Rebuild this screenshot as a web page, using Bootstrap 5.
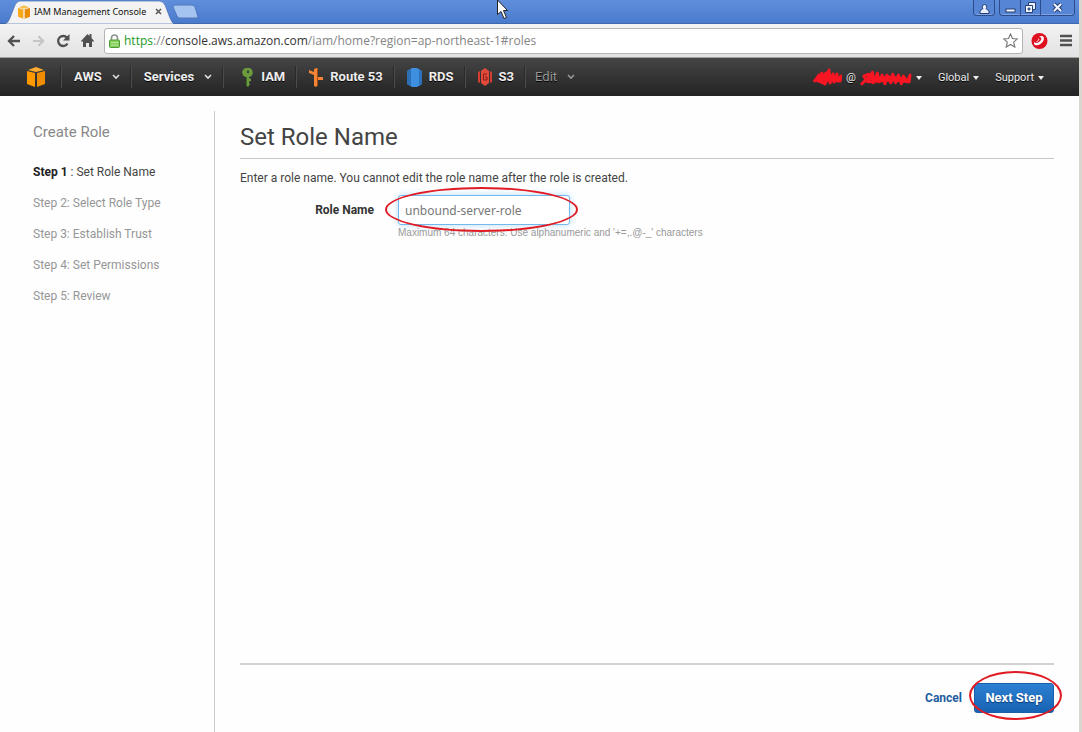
<!DOCTYPE html>
<html lang="en">
<head>
<meta charset="utf-8">
<meta name="viewport" content="width=device-width, initial-scale=1">
<title>IAM Management Console</title>
<link href="https://cdn.jsdelivr.net/npm/bootstrap@5.3.0/dist/css/bootstrap.min.css" rel="stylesheet">
<style>
  body { font-family: Roboto, "Liberation Sans", sans-serif; font-size: 12px; line-height: 16px; color: #444; background: #fefefe; }
  .browser { border-right: 3px solid #d9d5cf; }
  .titlebar { height: 24px; background: linear-gradient(#5f8fdb, #4a7acc); border-bottom: 1px solid #3f68ad; }
  .browser-tab { width: 169px; margin-left: 5px; padding: 0 12px 0 13px; font-family: "Noto Sans", sans-serif; font-size: 9px; color: #111; }
  .tab-shape { top: 0; left: 0; width: 100%; height: 24px; }
  .tab-face { z-index: 1; }
  .bare { border: 0; padding: 0; background: none; line-height: 0; color: inherit; }
  .new-tab { margin: 0 0 1px -2px; }
  .pointer { left: 497px; top: 0; z-index: 5; }
  .win-group { height: 16px; border: 1px solid #2c4c8e; border-top: 0; border-radius: 0 0 4px 4px; background: #5585d4; box-shadow: inset 0 -1px #7fa5e4; }
  .win-btn { width: 20px; height: 15px; }
  .win-btn + .win-btn { border-left: 1px solid #2c4c8e; }
  .win-close { width: 34px; }
  .toolbar { height: 34px; padding: 0 7px; background: linear-gradient(#f3f3f3, #e2e2e3); border-bottom: 1px solid #9da39d; color: #505050; }
  .tools { gap: 11px; }
  .address { height: 26px; margin-left: 10px; margin-right: 8px; padding: 0 4px; background: #fff; border: 1px solid #b4b4b4; border-radius: 3px; font-family: "Open Sans", sans-serif; font-size: 12px; color: #333; }
  .proto { color: #1c9a1c; }
  .dim { color: #858585; }
  .console-nav { height: 38px; background: linear-gradient(#454545, #232323); font-size: 13px; font-weight: 700; }
  .console-nav a { color: #eee; text-decoration: none; text-shadow: 0 1px #000; }
  .console-nav .cell { height: 22px; display: flex; align-items: center; border-left: 1px solid #2a2a2a; box-shadow: inset 1px 0 #4b4b4b; padding: 0 10px 0 13px; gap: 7px; }
  .console-nav .cell.menu { gap: 10px; padding: 0 10px 0 13px; }
  .console-nav .cell.key { padding-left: 19px; gap: 8px; }
  .brand-cell { width: 60px; padding-left: 26px; }
  .console-nav .cell.edit { color: #999; font-weight: 400; padding-left: 10px; }
  .account { font-size: 11px; font-weight: 400; padding: 2px 35px 0 0; gap: 16px; }
  .account a { display: flex; align-items: center; gap: 4px; }
  .sidebar { width: 215px; padding-left: 33px; margin-top: 15px; border-right: 1px solid #c9cbc9; }
  .sidebar h2 { font-size: 15px; line-height: 20px; margin: 11px 0 0; color: #888; font-weight: 400; }
  .steps { margin: 15px 0 0; color: #969696; }
  .steps li { height: 31px; line-height: 31px; }
  .steps .now { color: #444; }
  .steps strong { color: #222; }
  .pane { padding: 25px 25px 19px; }
  .pane h1 { font-size: 24px; line-height: 32px; font-weight: 400; color: #444; margin: 0; padding-bottom: 5px; border-bottom: 1px solid #c3c9c0; }
  .intro { margin: 11px 0 0; }
  .name-row { margin-top: 9px; }
  .name-label { width: 158px; padding-right: 24px; line-height: 30px; font-weight: 700; color: #333; text-align: right; }
  .name-box { width: 172px; height: 30px; padding: 0 6px; border: 1px solid #74b9ec; border-radius: 3px; font-family: "Noto Sans", sans-serif; font-size: 12px; color: #777; box-shadow: 0 0 7px #b9ddf8; }
  .hint { font-family: "Liberation Sans", sans-serif; font-size: 10px; color: #999; }
  .ring { pointer-events: none; border: 2px solid #e01b24; border-radius: 50%; }
  .ring-name { left: -13px; top: -8px; width: 193px; height: 45px; }
  .ring-next { left: -5px; top: -12px; width: 93px; height: 49px; }
  .actions { padding-top: 18px; border-top: 2px solid #d2d2d2; gap: 12px; }
  .cancel { font-weight: 700; color: #1f5d9e; text-decoration: none; }
  .btn-next { width: 80px; height: 30px; padding: 0; font-size: 13px; line-height: 28px; font-weight: 700; color: #fff; background: linear-gradient(#2e80d2, #1763b4); border: 1px solid #1a5fa9; border-radius: 3px; text-shadow: 0 1px 1px #0b3b73; }
  .btn-next:hover { color: #fff; }
</style>
</head>
<body>
<div class="browser d-flex flex-column min-vh-100 position-relative">

  <header class="titlebar d-flex justify-content-between">
    <div class="d-flex align-items-center">
      <div class="browser-tab position-relative d-flex align-items-center h-100">
        <svg class="tab-shape position-absolute" viewBox="0 0 169 24" preserveAspectRatio="none"><path d="M0 24Q3 23 5 18L10 5Q12 1 15 1H154Q158 1 160 5L165 18Q167 23 169 24Z" fill="#f3f3f3" stroke="#466eaf" stroke-width=".7"/></svg>
        <svg class="tab-face position-relative" width="12" height="14" viewBox="0 0 18 20"><path fill="#f7a81b" d="M0 4L8 6V20L0 17Z"/><path fill="#e88d05" d="M18 4L10 6V20L18 17Z"/><path fill="#fbc04d" d="M1 3L9 0L17 3L9 5Z"/></svg>
        <span class="tab-face position-relative ms-1 text-nowrap">IAM Management Console</span>
        <button class="bare tab-face position-relative ms-auto" aria-label="Close tab"><svg width="7" height="7" viewBox="0 0 7 7"><path d="M1 1L6 6M6 1L1 6" stroke="#555" stroke-width="1.5"/></svg></button>
      </div>
      <button class="bare new-tab" aria-label="New tab"><svg width="27" height="15" viewBox="0 0 27 15"><path d="M3 1H20Q22 1 23 3L26 13Q26 14 24 14H8Q6 14 5 12L1 3Q1 1 3 1Z" fill="#a5c4f0" stroke="#5079bd"/></svg></button>
    </div>
    <div class="d-flex me-1">
      <div class="win-group me-1"><button class="bare win-btn" aria-label="Profile"><svg width="11" height="10" viewBox="0 0 11 10"><path d="M5.500.5A2.300 2.300 0 0 1 7 4.500L10 7V9.500H1V7L4 4.500A2.300 2.300 0 0 1 5.500.5Z" fill="#e8f0ff" stroke="#263f73"/></svg></button></div>
      <div class="win-group d-flex">
        <button class="bare win-btn" aria-label="Minimize"><svg width="11" height="11" viewBox="0 0 11 11"><rect x="1" y="7" width="9" height="3" fill="#f4f8ff" stroke="#263f73"/></svg></button>
        <button class="bare win-btn" aria-label="Restore"><svg width="11" height="11" viewBox="0 0 11 11"><path d="M3.500.5H10.500V7.500H3.500Z" fill="#e8f0ff" stroke="#263f73"/><path d="M.5 3.500H7.500V10.500H.5Z" fill="#f4f8ff" stroke="#263f73"/><path d="M3 6H5V8H3Z" fill="#4a7acc" stroke="#263f73" stroke-width=".7"/></svg></button>
        <button class="bare win-btn win-close" aria-label="Close"><svg width="11" height="11" viewBox="0 0 11 11"><path d="M2 2L9 9M9 2L2 9" stroke="#263f73" stroke-width="4"/><path d="M2 2L9 9M9 2L2 9" stroke="#f4f8ff" stroke-width="2"/></svg></button>
      </div>
    </div>
  </header>
  <svg class="pointer position-absolute" width="12" height="20" viewBox="0 0 12 20"><path d="M.5 0V14.500L4 11.500L7 18.500L9.500 17.500L6.500 10.500H10.500Z" fill="#fff" stroke="#222"/></svg>

  <div class="toolbar d-flex align-items-center">
    <div class="tools d-flex align-items-center">
      <button class="bare" aria-label="Back"><svg width="14" height="14" viewBox="0 0 14 14"><path d="M7 2L2 7L7 12M2 7H13" fill="none" stroke="#505050" stroke-width="2.300"/></svg></button>
      <button class="bare" aria-label="Forward"><svg width="13" height="14" viewBox="0 0 14 14"><path d="M7 2L12 7L7 12M12 7H1" fill="none" stroke="#c6c6c6" stroke-width="2.300"/></svg></button>
      <button class="bare" aria-label="Reload"><svg width="14" height="14" viewBox="0 0 14 14"><path d="M11 3.800A5 5 0 1 0 11.500 9.500" fill="none" stroke="#505050" stroke-width="2.300"/><path d="M13.500 0V6.500H7Z" fill="#505050"/></svg></button>
      <button class="bare" aria-label="Home"><svg width="13" height="15" viewBox="0 0 13 15"><path d="M0 8L6.500 1L8.500 3V1H10.500V5L13 8L12 9L11 8V14H8V10H5V14H2V8L1 9Z" fill="#505050"/></svg></button>
    </div>
    <div class="address d-flex align-items-center flex-grow-1">
      <svg width="11" height="14" viewBox="0 0 11 14"><path d="M2.500 7V4A3 3 0 0 1 8.500 4V7" fill="none" stroke="#8b928b" stroke-width="1.600"/><rect x=".5" y="6" width="10" height="7.500" rx="1" fill="#84cf5c" stroke="#4c9a35"/><path d="M2 8.500H9M2 11H9" stroke="#b6e79b"/></svg>
      <span class="ms-1 text-nowrap"><span class="proto">https</span><span class="dim">://</span>console.aws.amazon.com<span class="dim">/iam/home?region=ap-northeast-1#roles</span></span>
      <button class="bare ms-auto" aria-label="Bookmark"><svg width="15" height="15" viewBox="0 0 16 16"><path d="M8 1L10.100 5.800L15.300 6.300L11.400 9.700L12.600 15L8 12.200L3.400 15L4.600 9.700L.7 6.300L5.900 5.800Z" fill="#fff" stroke="#777" stroke-width="1.200"/></svg></button>
    </div>
    <button class="bare" aria-label="Security extension"><svg width="17" height="18" viewBox="0 0 17 18"><circle cx="8.500" cy="9" r="8" fill="#df1020"/><path d="M3 9.500C3.500 12 8 11 10 8C11 6 10 5 8 5C11 3 14 4.500 12.500 8.500C10.500 13 4.500 14.500 3 12Z" fill="#fff"/><path d="M7 6.500C8.500 7.500 7.500 9 5.500 9.700" stroke="#fff" fill="none"/></svg></button>
    <button class="bare ms-2 ps-1" aria-label="Menu"><svg width="12" height="13" viewBox="0 0 12 13"><path d="M0 2H12M0 6.500H12M0 11H12" stroke="#505050" stroke-width="2.600"/></svg></button>
  </div>

  <nav class="console-nav d-flex align-items-center">
    <a href="#" class="brand-cell" aria-label="Console home"><svg width="20" height="20" viewBox="0 0 20 20"><path fill="#f90" d="M1 4L9 6V20L1 17Z"/><path fill="#f08c00" d="M19 4L11 6V20L19 17Z"/><path fill="#ffab2e" d="M2 3L10 0L18 3L10 5Z"/></svg></a>
    <a href="#" class="cell menu">AWS<svg width="8" height="6" viewBox="0 0 8 6"><path d="M1 1L4 4L7 1" fill="none" stroke="#ddd" stroke-width="1.600"/></svg></a>
    <a href="#" class="cell menu">Services<svg width="8" height="6" viewBox="0 0 8 6"><path d="M1 1L4 4L7 1" fill="none" stroke="#ddd" stroke-width="1.600"/></svg></a>
    <a href="#" class="cell key"><svg width="11" height="19" viewBox="0 0 11 19"><path fill-rule="evenodd" d="M5.500 0A4.500 4.500 0 0 1 7 9V10L9 11V13L7 13.500V15L8 16L6 19L4 17V9A4.500 4.500 0 0 1 5.500 0ZM5 2.500H7V5H5Z" fill="#6b9b3d"/><path d="M4.500 9V17" stroke="#3d6a22"/></svg>IAM</a>
    <a href="#" class="cell"><svg width="14" height="19" viewBox="0 0 14 19"><path d="M0 2L5 4V1L8 0L9 1V9L14 9V12H9V17L7 19L5 18V7L0 5Z" fill="#f58534"/><path d="M8.500 1V18" stroke="#a84e14"/></svg>Route 53</a>
    <a href="#" class="cell"><svg width="15" height="19" viewBox="0 0 15 19"><path d="M0 3L5 0H10L15 3V16L10 19H5L0 16Z" fill="#3f8fe0"/><path d="M0 3L4 1V18L0 16Z" fill="#2b6fb5"/><path d="M12 1L15 3V16L12 18Z" fill="#2d72ba"/></svg>RDS</a>
    <a href="#" class="cell"><svg width="14" height="18" viewBox="0 0 14 18"><path d="M0 4L2 3V15L0 14ZM14 4L12 3V15L14 14Z" fill="#d43d31"/><path d="M3 3L7 0L11 3V15L7 18L3 15Z" fill="#e04a3b"/><path d="M9 6H5.500V12H9V9H7" fill="none" stroke="#8c1b16"/></svg>S3</a>
    <a href="#" class="cell menu edit">Edit<svg width="8" height="6" viewBox="0 0 8 6"><path d="M1 1L4 4L7 1" fill="none" stroke="#999" stroke-width="1.600"/></svg></a>
    <div class="account d-flex ms-auto">
      <a href="#"><svg width="29" height="20" viewBox="0 0 29 20"><path d="M1 14L6 7L5 13L9 5L8 14L13 5L12 16L16 2L17 15L20 6L21 14L24 6L24 13L28 8L27 13L17 11L10 15L4 12L18 9L26 11" fill="none" stroke="#fa1522" stroke-width="3" stroke-linejoin="round"/></svg>@<svg width="52" height="20" viewBox="0 0 54 20"><path d="M1 17L6 12L4 8L9 6L8 14L13 4L14 15L18 5L20 14L23 7L26 16L28 7L32 15L34 6L37 15L40 7L43 16L45 8L49 14L52 7L51 14L35 12L10 14L7 11L30 9L48 11" fill="none" stroke="#fa1522" stroke-width="3" stroke-linejoin="round"/></svg><svg width="6" height="4" viewBox="0 0 6 4"><path d="M0 0H6L3 4Z" fill="#eee"/></svg></a>
      <a href="#">Global<svg width="6" height="4" viewBox="0 0 6 4"><path d="M0 0H6L3 4Z" fill="#eee"/></svg></a>
      <a href="#">Support<svg width="6" height="4" viewBox="0 0 6 4"><path d="M0 0H6L3 4Z" fill="#eee"/></svg></a>
    </div>
  </nav>

  <div class="d-flex flex-grow-1">
    <aside class="sidebar flex-shrink-0">
      <h2>Create Role</h2>
      <ol class="steps list-unstyled">
        <li class="now"><strong>Step 1</strong> : Set Role Name</li>
        <li>Step 2: Select Role Type</li>
        <li>Step 3: Establish Trust</li>
        <li>Step 4: Set Permissions</li>
        <li>Step 5: Review</li>
      </ol>
    </aside>
    <main class="pane d-flex flex-column flex-grow-1">
      <h1>Set Role Name</h1>
      <p class="intro">Enter a role name. You cannot edit the role name after the role is created.</p>
      <div class="name-row d-flex">
        <label class="name-label flex-shrink-0" for="roleName">Role Name</label>
        <div>
          <div class="position-relative d-flex">
            <input class="name-box" id="roleName" type="text" value="unbound-server-role">
            <span class="ring ring-name position-absolute"></span>
          </div>
          <div class="hint">Maximum 64 characters. Use alphanumeric and '+=,.@-_' characters</div>
        </div>
      </div>
      <div class="actions d-flex justify-content-end align-items-center mt-auto">
        <a class="cancel" href="#">Cancel</a>
        <div class="position-relative d-flex">
          <button class="btn btn-next" type="button">Next Step</button>
          <span class="ring ring-next position-absolute"></span>
        </div>
      </div>
    </main>
  </div>
</div>
<script src="https://cdn.jsdelivr.net/npm/bootstrap@5.3.0/dist/js/bootstrap.bundle.min.js"></script>
</body>
</html>
